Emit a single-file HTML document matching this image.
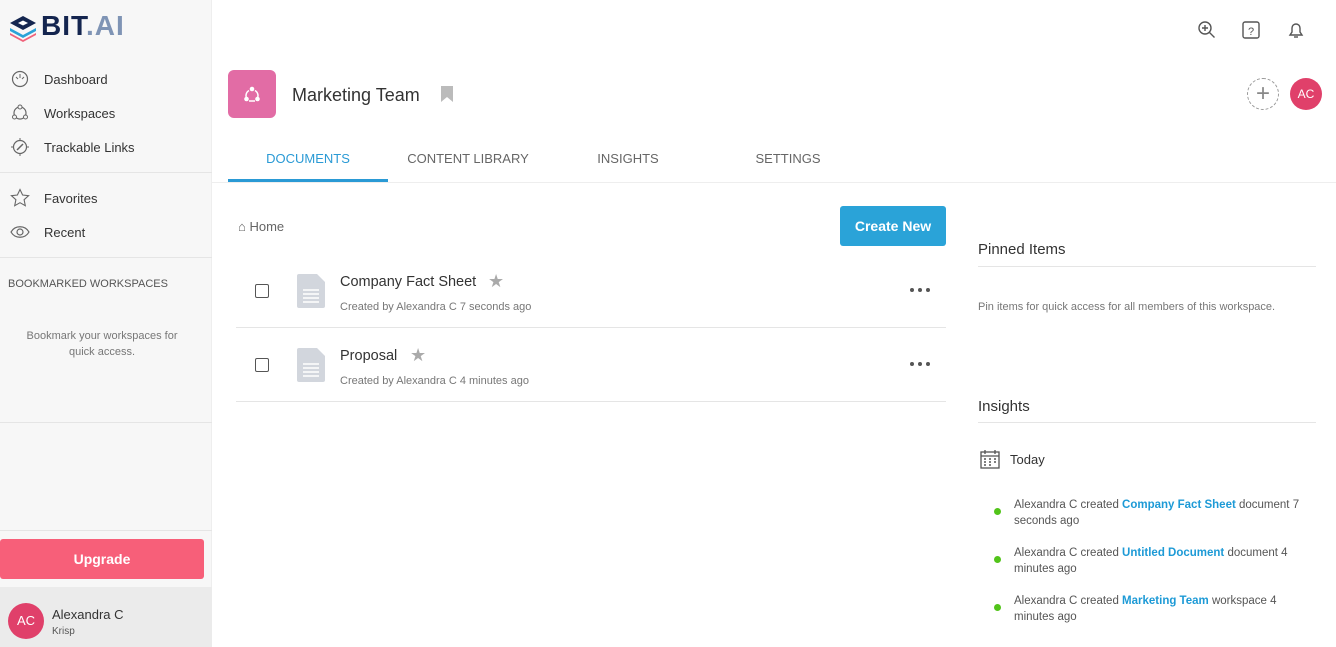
<!DOCTYPE html>
<html><head><meta charset="utf-8"><style>
*{box-sizing:border-box;margin:0;padding:0}
body{width:1336px;height:647px;overflow:hidden;font-family:"Liberation Sans",sans-serif;background:#fff;position:relative;color:#333}
.side{position:absolute;left:0;top:0;width:212px;height:647px;background:#f7f7f7;border-right:1px solid #eee}
.abs{position:absolute}
.nav{position:absolute;left:44px;font-size:13px;color:#333}
.ico{position:absolute;left:10px}
.hr{position:absolute;height:1px;background:#e5e5e5}
.small{font-size:11px;color:#777}
a{color:#1d9ad6;text-decoration:none;font-weight:bold}
</style></head><body>
<div class="side">
 <svg class="abs" style="left:8px;top:14px" width="30" height="28" viewBox="0 0 30 28"><path d="M15 2 L28 9 L15 16 L2 9Z" fill="#14254f"/><path d="M10 9 L15 6.5 L20 9 L15 11.5Z" fill="#fff"/><path d="M2 14 L15 21 L28 14 L28 17 L15 24 L2 17Z" fill="#2aa3d8"/><path d="M2 19 L15 26 L28 19 L28 21 L15 28 L2 21Z" fill="#f0637b"/></svg>
 <div class="abs" style="left:41px;top:10px;font-size:28px;font-weight:bold;color:#14254f;letter-spacing:1px">BIT<span style="color:#7f94b5">.AI</span></div>
 <svg class="ico" style="top:70px" width="20" height="18"><circle cx="10" cy="9" r="7.5" fill="none" stroke="#666" stroke-width="1.2"/><path d="M10 4v4M6 7l2 2M14 7l-2 2" stroke="#666"/></svg>
 <div class="nav" style="top:72px">Dashboard</div>
 <svg class="ico" style="top:103px" width="20" height="20"><circle cx="10" cy="10" r="6" fill="none" stroke="#666" stroke-width="1.2"/><circle cx="10" cy="4" r="2" fill="#f7f7f7" stroke="#666"/><circle cx="4.5" cy="14" r="2" fill="#f7f7f7" stroke="#666"/><circle cx="15.5" cy="14" r="2" fill="#f7f7f7" stroke="#666"/></svg>
 <div class="nav" style="top:106px">Workspaces</div>
 <svg class="ico" style="top:137px" width="20" height="20"><circle cx="10" cy="10" r="6.5" fill="none" stroke="#666" stroke-width="1.2"/><path d="M7 13l6-6" stroke="#666" stroke-width="1.5"/><path d="M10 1v2M10 17v2M1 10h2M17 10h2" stroke="#666"/></svg>
 <div class="nav" style="top:140px">Trackable Links</div>
 <div class="hr" style="left:0;width:212px;top:172px"></div>
 <svg class="ico" style="top:188px" width="20" height="20"><path d="M10 1.5l2.6 5.5 6 .7-4.5 4 1.2 6-5.3-3-5.3 3 1.2-6-4.5-4 6-.7z" fill="none" stroke="#666" stroke-width="1.1"/></svg>
 <div class="nav" style="top:191px">Favorites</div>
 <svg class="ico" style="top:224px" width="20" height="16"><path d="M1 8c4-7 14-7 18 0c-4 7-14 7-18 0z" fill="none" stroke="#666" stroke-width="1.2"/><circle cx="10" cy="8" r="3" fill="none" stroke="#666" stroke-width="1.2"/></svg>
 <div class="nav" style="top:225px">Recent</div>
 <div class="hr" style="left:0;width:212px;top:257px"></div>
 <div class="abs small" style="left:8px;top:278px;color:#555">BOOKMARKED WORKSPACES</div>
 <div class="abs small" style="left:0;width:204px;top:328px;text-align:center;line-height:16px">Bookmark your workspaces for<br>quick access.</div>
 <div class="hr" style="left:0;width:212px;top:422px"></div>
 <div class="hr" style="left:0;width:212px;top:530px"></div>
 <div class="abs" style="left:0;top:539px;width:204px;height:40px;background:#f75f79;border-radius:3px;color:#fff;font-weight:bold;font-size:14px;text-align:center;line-height:40px">Upgrade</div>
 <div class="abs" style="left:0;top:587px;width:212px;height:60px;background:#ebebeb"></div>
 <div class="abs" style="left:8px;top:603px;width:36px;height:36px;border-radius:50%;background:#e0406a;color:#fff;font-size:13px;text-align:center;line-height:36px">AC</div>
 <div class="abs" style="left:52px;top:607px;font-size:13px;color:#333">Alexandra C</div>
 <div class="abs" style="left:52px;top:626px;font-size:10px;color:#555">Krisp</div>
</div>
<svg class="abs" style="left:1197px;top:20px" width="20" height="20"><circle cx="8" cy="8" r="6" fill="none" stroke="#555" stroke-width="1.4"/><path d="M12.5 12.5l5 5M8 5v6M5 8h6" stroke="#555" stroke-width="1.4"/></svg>
<svg class="abs" style="left:1241px;top:20px" width="20" height="20"><rect x="2" y="2" width="16" height="16" rx="2" fill="none" stroke="#555" stroke-width="1.4"/><text x="10" y="15" font-size="11" text-anchor="middle" fill="#555" font-family="Liberation Sans">?</text></svg>
<svg class="abs" style="left:1286px;top:20px" width="20" height="20"><path d="M4 15h12l-2-3V8a4 4 0 0 0-8 0v4z" fill="none" stroke="#555" stroke-width="1.4"/><path d="M8 17h4" stroke="#555" stroke-width="1.4"/></svg>
<div class="abs" style="left:228px;top:70px;width:48px;height:48px;border-radius:6px;background:#e26ca5"></div>
<svg class="abs" style="left:240px;top:82px" width="24" height="24"><path d="M9 8.5A6 6 0 0 0 7 17M15 8.5A6 6 0 0 1 17 17M9 19h6" fill="none" stroke="#fff" stroke-width="1.5"/><circle cx="12" cy="7" r="2.3" fill="#fff"/><circle cx="6.5" cy="17" r="2.3" fill="#fff"/><circle cx="17.5" cy="17" r="2.3" fill="#fff"/></svg>
<div class="abs" style="left:292px;top:85px;font-size:18px;color:#333">Marketing Team</div>
<svg class="abs" style="left:441px;top:86px" width="12" height="16"><path d="M0 0h12v16l-6-5-6 5z" fill="#bbb"/></svg>
<div class="abs" style="left:1247px;top:78px;width:32px;height:32px;border-radius:50%;border:1px dashed #999;color:#888;font-size:24px;text-align:center;line-height:29px">+</div>
<div class="abs" style="left:1290px;top:78px;width:32px;height:32px;border-radius:50%;background:#e0406a;color:#fff;font-size:12px;text-align:center;line-height:32px">AC</div>
<div class="abs" style="left:228px;top:151px;width:160px;text-align:center;font-size:13px;color:#2a9ad5">DOCUMENTS</div>
<div class="abs" style="left:388px;top:151px;width:160px;text-align:center;font-size:13px;color:#666">CONTENT LIBRARY</div>
<div class="abs" style="left:548px;top:151px;width:160px;text-align:center;font-size:13px;color:#666">INSIGHTS</div>
<div class="abs" style="left:708px;top:151px;width:160px;text-align:center;font-size:13px;color:#666">SETTINGS</div>
<div class="hr" style="left:212px;width:1124px;top:182px;background:#eee"></div>
<div class="abs" style="left:228px;top:179px;width:160px;height:3px;background:#2a9ad5"></div>
<div class="abs" style="left:238px;top:219px;font-size:13px;color:#666">⌂ Home</div>
<div class="abs" style="left:840px;top:206px;width:106px;height:40px;background:#2aa3d8;border-radius:3px;color:#fff;font-weight:bold;font-size:14px;text-align:center;line-height:40px">Create New</div>
<div class="abs" style="left:255px;top:284px;width:14px;height:14px;border:1.5px solid #555;border-radius:2px"></div>
<svg class="abs" style="left:297px;top:274px" width="28" height="34"><path d="M0 2a2 2 0 0 1 2-2h18l8 8v24a2 2 0 0 1-2 2H2a2 2 0 0 1-2-2z" fill="#d2d6dd"/><path d="M6 16h16M6 20h16M6 24h16M6 28h16" stroke="#fff" stroke-width="1.6"/></svg>
<div class="abs" style="left:340px;top:274px;font-size:14.5px;color:#333">Company Fact Sheet</div>
<div class="abs" style="left:488px;top:271px;color:#aaa;font-size:18px">★</div>
<div class="abs" style="left:340px;top:301px;font-size:11px;color:#777">Created by Alexandra C 7 seconds ago</div>
<svg class="abs" style="left:909px;top:287px" width="22" height="6"><circle cx="3" cy="3" r="2" fill="#555"/><circle cx="11" cy="3" r="2" fill="#555"/><circle cx="19" cy="3" r="2" fill="#555"/></svg>
<div class="hr" style="left:236px;width:710px;top:327px"></div>
<div class="abs" style="left:255px;top:358px;width:14px;height:14px;border:1.5px solid #555;border-radius:2px"></div>
<svg class="abs" style="left:297px;top:348px" width="28" height="34"><path d="M0 2a2 2 0 0 1 2-2h18l8 8v24a2 2 0 0 1-2 2H2a2 2 0 0 1-2-2z" fill="#d2d6dd"/><path d="M6 16h16M6 20h16M6 24h16M6 28h16" stroke="#fff" stroke-width="1.6"/></svg>
<div class="abs" style="left:340px;top:348px;font-size:14.5px;color:#333">Proposal</div>
<div class="abs" style="left:410px;top:345px;color:#aaa;font-size:18px">★</div>
<div class="abs" style="left:340px;top:375px;font-size:11px;color:#777">Created by Alexandra C 4 minutes ago</div>
<svg class="abs" style="left:909px;top:361px" width="22" height="6"><circle cx="3" cy="3" r="2" fill="#555"/><circle cx="11" cy="3" r="2" fill="#555"/><circle cx="19" cy="3" r="2" fill="#555"/></svg>
<div class="hr" style="left:236px;width:710px;top:401px"></div>
<div class="abs" style="left:978px;top:241px;font-size:15px;color:#333">Pinned Items</div>
<div class="hr" style="left:978px;width:338px;top:266px"></div>
<div class="abs small" style="left:978px;top:301px">Pin items for quick access for all members of this workspace.</div>
<div class="abs" style="left:978px;top:398px;font-size:15px;color:#333">Insights</div>
<div class="hr" style="left:978px;width:338px;top:422px"></div>
<svg class="abs" style="left:980px;top:450px" width="20" height="19"><rect x="1" y="2" width="18" height="16" fill="none" stroke="#555" stroke-width="1.3"/><path d="M1 6h18M5 0v4M15 0v4" stroke="#555" stroke-width="1.3"/><path d="M4 9h2M9 9h2M14 9h2M4 12h2M9 12h2M14 12h2M4 15h2M9 15h2" stroke="#555" stroke-width="1.5"/></svg>
<div class="abs" style="left:1010px;top:452px;font-size:13px;color:#333">Today</div>
<div class="abs" style="left:1014px;top:497px;width:300px;font-size:11.5px;color:#555;line-height:16px">Alexandra C created <a>Company Fact Sheet</a> document 7 seconds ago</div>
<div class="abs" style="left:1014px;top:545px;width:300px;font-size:11.5px;color:#555;line-height:16px">Alexandra C created <a>Untitled Document</a> document 4 minutes ago</div>
<div class="abs" style="left:1014px;top:593px;width:300px;font-size:11.5px;color:#555;line-height:16px">Alexandra C created <a>Marketing Team</a> workspace 4 minutes ago</div>
<div class="abs" style="left:994px;top:508px;width:7px;height:7px;border-radius:50%;background:#52c41a"></div>
<div class="abs" style="left:994px;top:556px;width:7px;height:7px;border-radius:50%;background:#52c41a"></div>
<div class="abs" style="left:994px;top:604px;width:7px;height:7px;border-radius:50%;background:#52c41a"></div>
</body></html>
